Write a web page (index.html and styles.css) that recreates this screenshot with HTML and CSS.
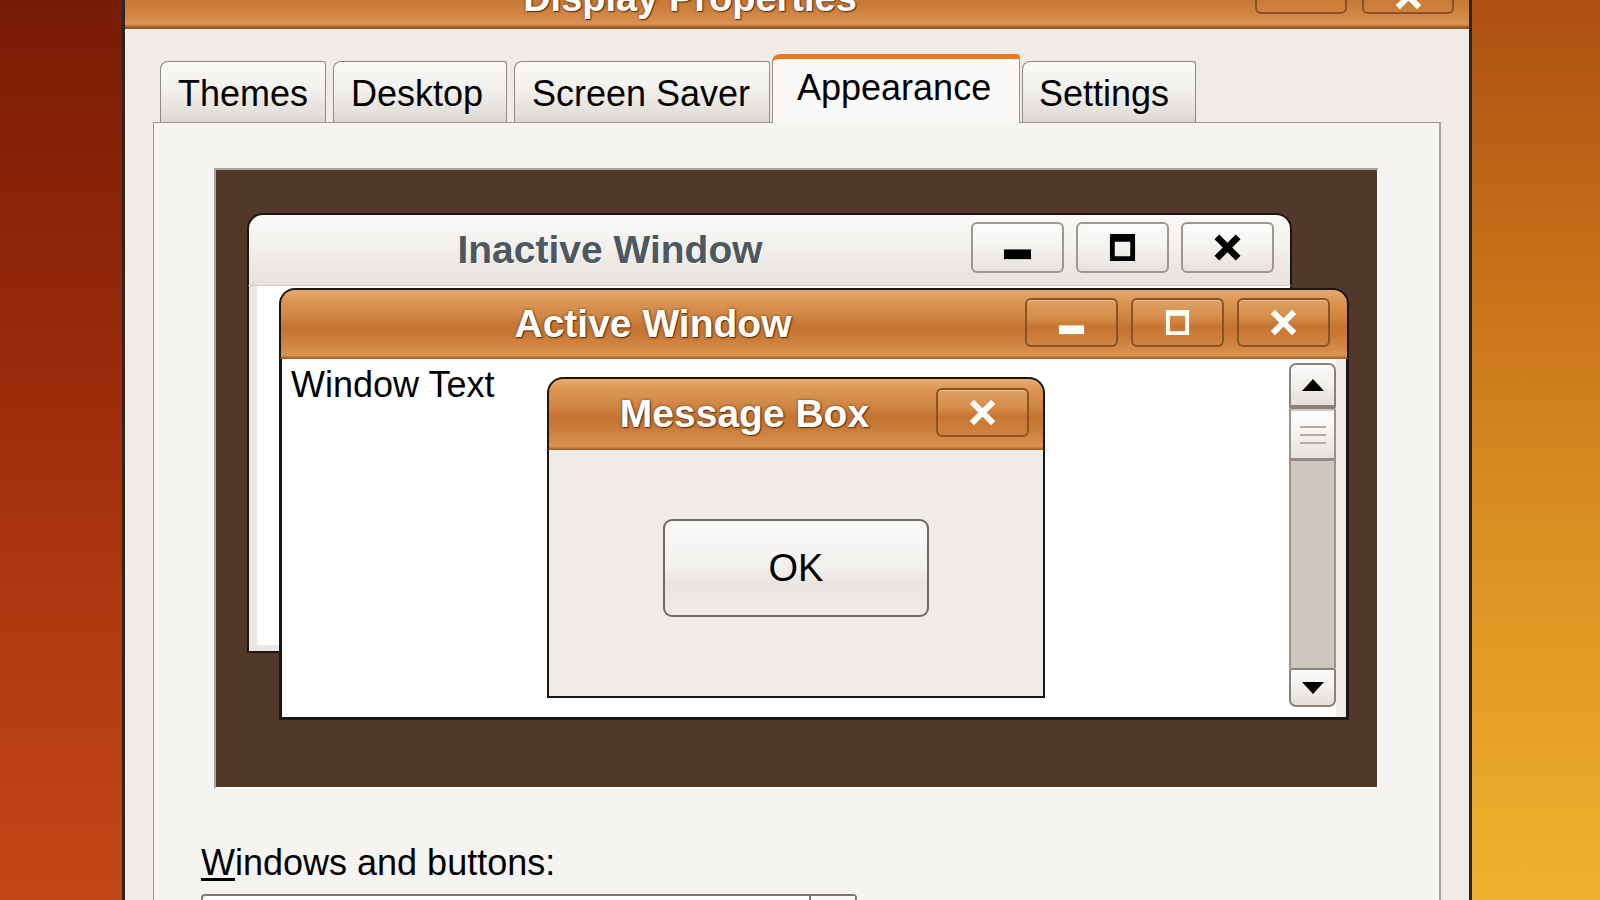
FILE: index.html
```html
<!DOCTYPE html>
<html lang="en">
<head>
<meta charset="utf-8">
<title>Display Properties</title>
<link rel="stylesheet" href="styles.css">
</head>
<body>
<div class="desktop">
  <div class="window">
    <div class="titlebar orange-bar">
      <div class="title">Display Properties</div>
      <div class="tb-buttons">
        <span class="wbtn btn-o"></span>
        <span class="wbtn btn-o btn-close-top">
          <svg class="g" viewBox="0 0 30 30"><path d="M4 4L26 26M26 4L4 26" stroke="currentColor" stroke-width="6" fill="none"/></svg>
        </span>
      </div>
    </div>
    <div class="window-body">
      <div class="tabs">
        <div class="tab tab-themes">Themes</div>
        <div class="tab tab-desktop">Desktop</div>
        <div class="tab tab-saver">Screen Saver</div>
        <div class="tab tab-appearance active">Appearance</div>
        <div class="tab tab-settings">Settings</div>
      </div>
      <div class="panel">
        <div class="preview">
          <div class="mini inactive">
            <div class="mini-title light-bar">
              <div class="mini-caption">Inactive Window</div>
              <div class="mini-btns">
                <span class="wbtn btn-l"><svg class="g" viewBox="0 0 30 30"><rect x="1" y="17" width="28" height="10" fill="currentColor"/></svg></span>
                <span class="wbtn btn-l"><svg class="g" viewBox="0 0 30 30"><path fill="currentColor" fill-rule="evenodd" d="M2 1h26v28H2z M7 9h16v15H7z"/></svg></span>
                <span class="wbtn btn-l"><svg class="g" viewBox="0 0 30 30"><path d="M4 4L26 26M26 4L4 26" stroke="currentColor" stroke-width="7" fill="none"/></svg></span>
              </div>
            </div>
            <div class="mini-body inactive-body"></div>
          </div>

          <div class="mini active-win">
            <div class="mini-title orange-bar">
              <div class="mini-caption">Active Window</div>
              <div class="mini-btns">
                <span class="wbtn btn-o"><svg class="g" viewBox="0 0 30 30"><rect x="2" y="18" width="26" height="9" fill="currentColor"/></svg></span>
                <span class="wbtn btn-o"><svg class="g" viewBox="0 0 30 30"><path fill="currentColor" fill-rule="evenodd" d="M3 2h24v26H3z M7 8h16v16H7z"/></svg></span>
                <span class="wbtn btn-o"><svg class="g" viewBox="0 0 30 30"><path d="M4 4L26 26M26 4L4 26" stroke="currentColor" stroke-width="6" fill="none"/></svg></span>
              </div>
            </div>
            <div class="mini-body active-body">
              <div class="client-text">Window Text</div>
              <div class="sb-wrap">
                <div class="scrollbar">
                  <div class="sb-btn sb-up"><svg class="arrow" viewBox="0 0 22 12"><path d="M0 12L11 0L22 12z" fill="#000"/></svg></div>
                  <div class="sb-track">
                    <div class="sb-thumb">
                      <span class="grip"></span><span class="grip"></span><span class="grip"></span>
                    </div>
                  </div>
                  <div class="sb-btn sb-down"><svg class="arrow" viewBox="0 0 22 12"><path d="M0 0L11 12L22 0z" fill="#000"/></svg></div>
                </div>
              </div>
            </div>
          </div>

          <div class="mini msgbox">
            <div class="mini-title orange-bar">
              <div class="mini-caption">Message Box</div>
              <div class="mini-btns">
                <span class="wbtn btn-o"><svg class="g" viewBox="0 0 30 30"><path d="M4 4L26 26M26 4L4 26" stroke="currentColor" stroke-width="6" fill="none"/></svg></span>
              </div>
            </div>
            <div class="mini-body msg-body">
              <div class="ok-btn">OK</div>
            </div>
          </div>
        </div>
        <div class="field-label"><span class="accel">W</span>indows and buttons:</div>
        <div class="select"><span class="select-btn"></span></div>
      </div>
    </div>
  </div>
</div>
</body>
</html>
```

FILE: styles.css
```css
* { box-sizing: border-box; }

html, body {
  margin: 0;
  padding: 0;
}

body {
  width: 1600px;
  height: 900px;
  overflow: hidden;
  font-family: "Liberation Sans", Arial, sans-serif;
  font-size: 36px;
  color: #000;
  background:
    linear-gradient(180deg, #781c07 0%, #962709 35%, #b23a11 70%, #c24617 100%) left top / 122px 100% no-repeat,
    linear-gradient(180deg, #ad5013 0%, #c56e18 28%, #d98f22 58%, #f0b22c 100%) right top / 128px 100% no-repeat,
    #c06020;
}

.desktop {
  padding-left: 122px;
}

.window {
  width: 1350px;
  height: 945px;
  margin-top: -45px;
  background: #efebe7;
  border-left: 3px solid #2e2520;
  border-right: 3px solid #2e2520;
}

/* ---------- bars & buttons ---------- */
.orange-bar {
  background: linear-gradient(180deg,
    #e6ab70 0%, #db9654 16%, #cf8442 40%, #c47532 54%,
    #c97a37 68%, #d48946 86%, #dc9452 96%, #a8652a 100%);
}

.light-bar {
  background: linear-gradient(180deg, #fbfaf9 0%, #f3f1ee 45%, #ebe7e3 75%, #e6e2dd 100%);
}

.wbtn {
  display: flex;
  align-items: center;
  justify-content: center;
  width: 93px;
  height: 49px;
  border-radius: 6px;
}

.btn-o {
  color: #fff;
  border: 2px solid #8c5223;
  background: linear-gradient(180deg, #dfa066 0%, #d58c48 40%, #c67632 58%, #cf833f 100%);
  box-shadow: inset 0 1px 0 rgba(255, 230, 200, 0.45);
}

.btn-l {
  color: #000;
  border: 2px solid #9d988f;
  background: linear-gradient(180deg, #fdfcfb 0%, #f4f2ef 50%, #e6e2dd 100%);
}

.g {
  width: 29px;
  height: 29px;
  display: block;
}

/* ---------- main title bar ---------- */
.titlebar {
  display: flex;
  align-items: flex-start;
  height: 74px;
  border-bottom: 2px solid #8d5a2e;
}

.title {
  flex: 1;
  text-align: center;
  padding-top: 23px;
  line-height: 40px;
  font-weight: bold;
  font-size: 38px;
  color: #fff;
  text-shadow: 1px 1px 1px #5a3210, 0 0 3px rgba(80, 40, 10, 0.7);
}

.tb-buttons {
  display: flex;
  gap: 15px;
  padding-top: 10px;
  padding-right: 15px;
}

.tb-buttons .wbtn {
  width: 92px;
}

.btn-close-top .g {
  margin-top: 14px;
}

/* ---------- window body & tabs ---------- */
.window-body {
  padding: 25px 28px 0 28px;
}

.tabs {
  display: flex;
  align-items: flex-end;
  padding-left: 7px;
  height: 68px;
}

.tab {
  height: 61px;
  display: flex;
  align-items: center;
  padding: 4px 0 0 17px;
  border: 1px solid #8f8a82;
  border-bottom: none;
  border-radius: 8px 3px 0 0;
  background: linear-gradient(180deg, #fbfaf8 0%, #f3f1ed 45%, #e4e0da 85%, #d9d5cf 100%);
  white-space: nowrap;
}

.tab-themes { width: 166px; }
.tab-desktop { width: 174px; }
.tab-saver { width: 256px; }
.tab-appearance { width: 248px; }
.tab-settings { width: 174px; padding-left: 16px; }

.tab + .tab {
  margin-left: 7px;
}

.tab.active {
  position: relative;
  z-index: 2;
  height: 69px;
  margin-left: 2px;
  margin-bottom: -1px;
  padding: 0 0 6px 24px;
  border-top: 5px solid #ef7619;
  border-color: #ef7619 #9a958d #9a958d #9a958d;
  background: #fbfaf8;
}

.tab.active + .tab {
  margin-left: 2px;
}

.panel {
  position: relative;
  z-index: 1;
  height: 800px;
  padding: 45px 60px 0 60px;
  border: 1px solid #9c978f;
  border-right: 2px solid #a9a49c;
  background: #f6f4f1;
}

/* ---------- preview canvas ---------- */
.preview {
  position: relative;
  height: 621px;
  background: #523828;
  border: 2px solid;
  border-color: #aaa49c #ffffff #ffffff #aaa49c;
}

.mini {
  position: absolute;
  display: flex;
  flex-direction: column;
}

.mini-title {
  display: flex;
  align-items: flex-start;
  border: 2px solid #1c1612;
  border-bottom: 1px solid #9a6330;
  border-radius: 16px 16px 0 0;
}

.mini-caption {
  flex: 1;
  text-align: center;
  font-weight: bold;
  font-size: 39px;
  color: #fff;
  text-shadow: 1px 1px 1px #5a3210, 0 0 3px rgba(80, 40, 10, 0.75);
}

.mini-btns {
  display: flex;
}

.mini-body {
  flex: 1;
  border: 2px solid #1c1612;
  border-top: none;
}

/* inactive window */
.inactive {
  left: 31px;
  top: 43px;
  width: 1045px;
  height: 440px;
}

.inactive .mini-title {
  height: 73px;
  border-bottom-color: #d2cdc6;
}

.inactive .mini-caption {
  line-height: 70px;
  color: #4d5862;
  text-shadow: 1px 1px 0 #ffffff;
}

.inactive .mini-btns {
  gap: 12px;
  padding: 7px 16px 0 0;
}

.inactive .wbtn {
  height: 51px;
}

.inactive-body {
  background: #fff;
  border-color: #1c1612;
  box-shadow: inset 8px 0 0 #ebe7e2, inset 0 -6px 0 #ebe7e2;
}

/* active window */
.active-win {
  left: 63px;
  top: 118px;
  width: 1070px;
  height: 432px;
}

.active-win .mini-title {
  height: 71px;
}

.active-win .mini-caption {
  line-height: 68px;
}

.active-win .mini-btns {
  gap: 13px;
  padding: 8px 17px 0 0;
}

.active-body {
  display: flex;
  background: #fff;
  border-width: 0 3px 3px 3px;
}

.client-text {
  flex: 1;
  padding: 6px 0 0 9px;
  line-height: 40px;
}

.sb-wrap {
  padding: 4px 10px 10px 0;
  background: linear-gradient(90deg, #fff 47px, #efebe7 47px);
}

.scrollbar {
  width: 47px;
  height: 344px;
  display: flex;
  flex-direction: column;
}

.sb-btn {
  display: flex;
  align-items: center;
  justify-content: center;
  border: 2px solid #8b8279;
  background: linear-gradient(180deg, #fdfcfb 0%, #f1eeea 55%, #e3dfda 100%);
}

.sb-up {
  height: 46px;
  border-radius: 7px 7px 2px 2px;
  border-bottom-width: 4px;
}

.sb-down {
  height: 39px;
  border-radius: 2px 2px 7px 7px;
}

.arrow {
  width: 22px;
  height: 12px;
  display: block;
}

.sb-track {
  flex: 1;
  background: #cdc6bd;
  border-left: 2px solid #9b9289;
  border-right: 2px solid #9b9289;
  padding-top: 2px;
}

.sb-thumb {
  height: 50px;
  display: flex;
  flex-direction: column;
  align-items: center;
  justify-content: center;
  gap: 6px;
  background: linear-gradient(180deg, #ffffff 0%, #f2efeb 60%, #e4e0db 100%);
  border-bottom: 3px solid #948b82;
}

.grip {
  display: block;
  width: 26px;
  height: 2px;
  background: #b3aba2;
}

/* message box */
.msgbox {
  left: 331px;
  top: 207px;
  width: 498px;
  height: 321px;
}

.msgbox .mini-title {
  height: 73px;
}

.msgbox .mini-caption {
  line-height: 70px;
  padding-left: 4px;
}

.msgbox .mini-btns {
  padding: 9px 14px 0 0;
}

.msg-body {
  background: #efebe7;
  padding-top: 69px;
}

.ok-btn {
  width: 266px;
  height: 98px;
  margin: 0 auto;
  display: flex;
  align-items: center;
  justify-content: center;
  font-size: 38px;
  border: 2px solid #6f6a63;
  border-radius: 9px;
  background: linear-gradient(180deg, #fbfaf9 0%, #f3f1ee 50%, #e9e5e0 65%, #efece8 100%);
}

/* ---------- bottom fields ---------- */
.field-label {
  margin: 54px 0 0 -13px;
  line-height: 40px;
}

.accel {
  text-decoration: underline;
  text-decoration-thickness: 3px;
  text-underline-offset: 3px;
}

.select {
  display: flex;
  justify-content: flex-end;
  margin: 11px 0 0 -13px;
  width: 656px;
  height: 44px;
  border: 2px solid #7e7970;
  border-radius: 4px;
  background: #fff;
}

.select-btn {
  width: 46px;
  border-left: 2px solid #7e7970;
  background: linear-gradient(180deg, #fbfaf8, #e6e2dc);
}
```
